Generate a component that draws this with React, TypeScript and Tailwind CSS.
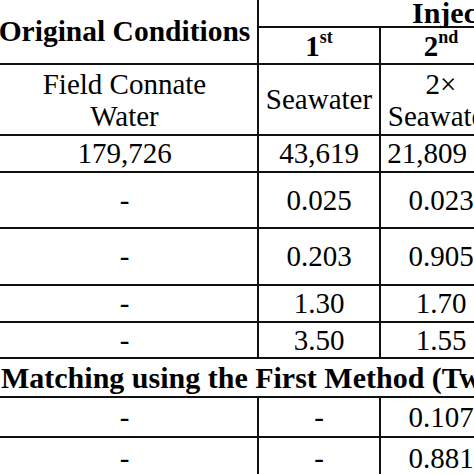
const cell = "flex items-center justify-center bg-white text-center";

function Ord({ n, sup }: { n: string; sup: string }) {
  return (
    <span className="font-bold">
      {n}
      <sup className="relative -top-[2px] align-super text-[18px] leading-none">{sup}</sup>
    </span>
  );
}

const rows: string[][] = [
  ["-", "0.025", "0.023", "0.012"],
  ["-", "0.203", "0.905", "1.810"],
  ["-", "1.30", "1.70", "2.10"],
  ["-", "3.50", "1.55", "1.20"],
];

export default function App() {
  return (
    <div className="h-[474px] w-[474px] overflow-hidden bg-white font-['Liberation_Serif',serif] text-[29px] text-black">
      <div className="-ml-[8px] grid w-[760px] grid-cols-[265px_120px_120px_245px] grid-rows-[26px_35px_69px_35px_54px_55px_35px_34px_37px_38px_40px] gap-[2px] bg-[#111]">
        <div className={`${cell} row-span-2 text-[29.5px] font-bold leading-none`}>Original Conditions</div>
        <div className="col-span-3 flex items-center bg-white pl-[153px] text-[30px] font-bold leading-none whitespace-nowrap">
          Injection Water Composition
        </div>

        <div className={`${cell} leading-none`}><Ord n="1" sup="st" /></div>
        <div className={`${cell} leading-none`}><Ord n="2" sup="nd" /></div>
        <div className={`${cell} leading-none`}><Ord n="3" sup="rd" /></div>

        <div className={`${cell} flex-col leading-[32px]`}>
          <span>Field Connate</span>
          <span>Water</span>
        </div>
        <div className={`${cell} leading-none`}>Seawater</div>
        <div className={`${cell} flex-col leading-[32px]`}>
          <span>2×</span>
          <span>Seawater</span>
        </div>
        <div className={`${cell} flex-col leading-[32px]`}>
          <span>4×</span>
          <span>Seawater</span>
        </div>

        <div className={`${cell} leading-none`}>179,726</div>
        <div className={`${cell} leading-none`}>43,619</div>
        <div className={`${cell} pr-[28px] leading-none`}>21,809</div>
        <div className={`${cell} leading-none`}>10,905</div>

        {rows.map((r, i) =>
          r.map((v, j) => (
            <div key={`${i}-${j}`} className={`${cell} leading-none`}>
              {v}
            </div>
          ))
        )}

        <div className="col-span-4 flex items-center bg-white pl-[9px] text-[30px] font-bold leading-none whitespace-nowrap">
          Matching using the First Method (Two Parameters)
        </div>

        <div className={`${cell} leading-none`}>-</div>
        <div className={`${cell} leading-none`}>-</div>
        <div className={`${cell} leading-none`}>0.107</div>
        <div className={`${cell} leading-none`}>0.094</div>

        <div className={`${cell} leading-none`}>-</div>
        <div className={`${cell} leading-none`}>-</div>
        <div className={`${cell} leading-none`}>0.881</div>
        <div className={`${cell} leading-none`}>0.752</div>
      </div>
    </div>
  );
}
